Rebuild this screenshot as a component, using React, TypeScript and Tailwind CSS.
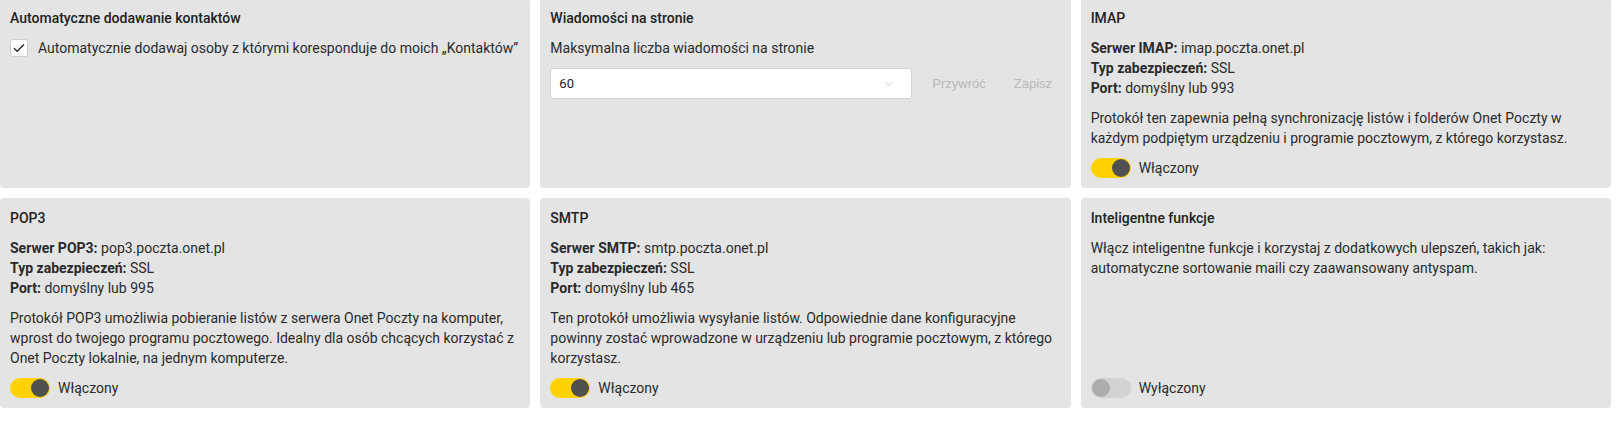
import { ChevronDown } from 'lucide-react'

function Toggle({ on, label }: { on: boolean; label: string }) {
  return (
    <div className="mt-auto flex items-center gap-[8px] pt-[10px]">
      <div
        className={`flex h-[20px] w-[40px] items-center rounded-full px-[1px] ${
          on ? 'justify-end bg-[#ffd200]' : 'justify-start bg-[#d2d2d2]'
        }`}
      >
        <div className={`h-[18px] w-[18px] rounded-full ${on ? 'bg-[#505050]' : 'bg-[#adadad]'}`} />
      </div>
      <span className="text-sm leading-5 text-[#2a2a2a]">{label}</span>
    </div>
  )
}

function Card({ title, children }: { title: string; children: React.ReactNode }) {
  return (
    <div className="flex flex-col rounded-[4px] bg-[#e4e4e4] p-[10px]">
      <h2 className="text-sm font-medium leading-5 text-[#222]">{title}</h2>
      {children}
    </div>
  )
}

function ServerInfo({ label, host, port }: { label: string; host: string; port: string }) {
  return (
    <div className="mt-[10px] text-sm leading-5 text-[#2a2a2a]">
      <div>
        <span className="font-bold">{label}:</span> {host}
      </div>
      <div>
        <span className="font-bold">Typ zabezpieczeń:</span> SSL
      </div>
      <div>
        <span className="font-bold">Port:</span> domyślny lub {port}
      </div>
    </div>
  )
}

export default function App() {
  return (
    <div className="min-h-[427px] bg-white font-['Roboto',sans-serif]">
      <div className="-mt-[2px] grid grid-cols-3 gap-[10px] pr-[9px]">
        {/* Contacts */}
        <Card title="Automatyczne dodawanie kontaktów">
          <label className="mt-[10px] flex items-center gap-[10px] text-sm leading-5 text-[#2a2a2a]">
            <span className="flex h-[18px] w-[18px] items-center justify-center rounded-[3px] border border-[#cfcfcf] bg-white">
              <svg width="12" height="10" viewBox="0 0 12 10" fill="none">
                <path d="M1 5.2 4.2 8.2 11 1.5" stroke="#2a2a2a" strokeWidth="1.4" />
              </svg>
            </span>
            Automatycznie dodawaj osoby z którymi koresponduje do moich „Kontaktów”
          </label>
        </Card>

        {/* Messages per page */}
        <Card title="Wiadomości na stronie">
          <p className="mt-[10px] text-sm leading-5 text-[#2a2a2a]">Maksymalna liczba wiadomości na stronie</p>
          <div className="mt-[10px] flex items-center">
            <div className="flex h-[31px] w-[362px] items-center justify-between rounded-[3px] border border-[#d4d4d4] bg-white pl-[8px] pr-[16px] text-[13px] text-[#222]">
              <span>60</span>
              <ChevronDown className="h-[12px] w-[12px] text-[#b5b5b5]" strokeWidth={1.5} />
            </div>
            <button className="ml-[20px] font-['Liberation_Sans',Arial,sans-serif] text-[13px] text-[#b9b9b9]">
              Przywróć
            </button>
            <button className="ml-[28px] font-['Liberation_Sans',Arial,sans-serif] text-[13px] text-[#b9b9b9]">
              Zapisz
            </button>
          </div>
        </Card>

        {/* IMAP */}
        <Card title="IMAP">
          <ServerInfo label="Serwer IMAP" host="imap.poczta.onet.pl" port="993" />
          <p className="mt-[10px] text-sm leading-5 text-[#2a2a2a]">
            Protokół ten zapewnia pełną synchronizację listów i folderów Onet Poczty w każdym podpiętym urządzeniu i
            programie pocztowym, z którego korzystasz.
          </p>
          <Toggle on label="Włączony" />
        </Card>

        {/* POP3 */}
        <Card title="POP3">
          <ServerInfo label="Serwer POP3" host="pop3.poczta.onet.pl" port="995" />
          <p className="mt-[10px] text-sm leading-5 text-[#2a2a2a]">
            Protokół POP3 umożliwia pobieranie listów z serwera Onet Poczty na komputer, wprost do twojego programu
            pocztowego. Idealny dla osób chcących korzystać z Onet Poczty lokalnie, na jednym komputerze.
          </p>
          <Toggle on label="Włączony" />
        </Card>

        {/* SMTP */}
        <Card title="SMTP">
          <ServerInfo label="Serwer SMTP" host="smtp.poczta.onet.pl" port="465" />
          <p className="mt-[10px] text-sm leading-5 text-[#2a2a2a]">
            Ten protokół umożliwia wysyłanie listów. Odpowiednie dane konfiguracyjne powinny zostać wprowadzone w
            urządzeniu lub programie pocztowym, z którego korzystasz.
          </p>
          <Toggle on label="Włączony" />
        </Card>

        {/* Smart features */}
        <Card title="Inteligentne funkcje">
          <p className="mt-[10px] text-sm leading-5 text-[#2a2a2a]">
            Włącz inteligentne funkcje i korzystaj z dodatkowych ulepszeń, takich jak: automatyczne sortowanie maili
            czy zaawansowany antyspam.
          </p>
          <Toggle on={false} label="Wyłączony" />
        </Card>
      </div>
    </div>
  )
}
